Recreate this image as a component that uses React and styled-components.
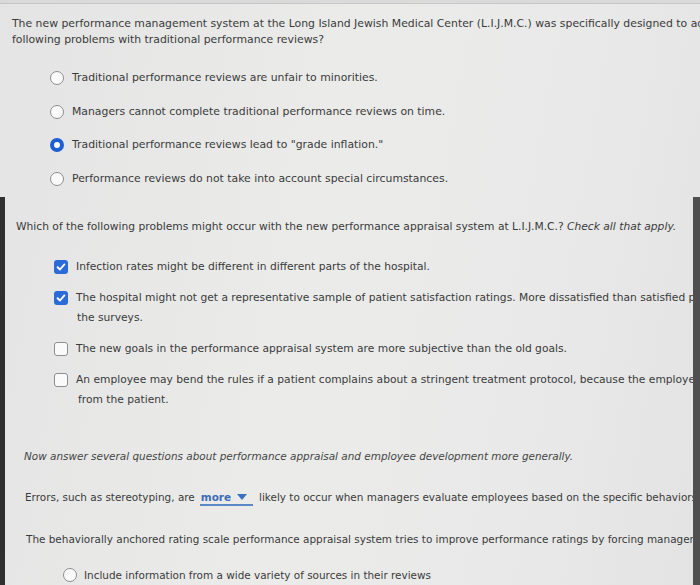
import React from 'react';
import styled, { createGlobalStyle } from 'styled-components';

const GlobalStyle = createGlobalStyle`
  html, body {
    margin: 0;
    padding: 0;
    background: #d9dad9;
  }
  body {
    font-family: "DejaVu Sans", Verdana, sans-serif;
    font-size: 10.7px;
    color: #3a3a3a;
  }
`;

const Page = styled.div`
  width: 700px;
  height: 582px;
  margin-top: 3px;
  overflow: hidden;
  border-top: 1px solid #c5c6c5;
  background: linear-gradient(100deg, #e3e4e3 0%, #ebecea 45%, #e8e9e8 75%, #e2e3e2 100%);
`;

const Intro = styled.section`
  padding: 12px 0 0 12px;
  overflow: hidden;
  font-size: 10.85px;
`;

const Framed = styled.div`
  margin-top: 8px;
  border-left: 5px solid #2f2f2f;
  border-right: 7px solid #4f4f4f;
  overflow: hidden;
`;

const Lower = styled.section`
  font-size: 10.45px;
`;

const Prompt = styled.div`
  line-height: 16px;
  white-space: nowrap;
  padding-left: ${(p) => p.$indent || 0}px;
  margin-top: ${(p) => p.$top || 0}px;
  font-style: ${(p) => (p.$italic ? 'italic' : 'normal')};
  color: ${(p) => (p.$italic ? '#454545' : 'inherit')};
`;

const Em = styled.em`
  font-style: italic;
`;

const OptionList = styled.div`
  display: flex;
  flex-direction: column;
  gap: ${(p) => p.$gap}px;
  margin-top: ${(p) => p.$top}px;
  padding-left: ${(p) => p.$indent}px;
`;

const Option = styled.div`
  display: flex;
  align-items: flex-start;
  gap: ${(p) => p.$gap || 8}px;
  line-height: 20px;
  white-space: nowrap;
`;

const Radio = styled.span`
  flex: none;
  box-sizing: border-box;
  width: 14px;
  height: 14px;
  margin-top: 3px;
  border-radius: 50%;
  border: ${(p) => (p.$on ? '4.5px solid #1d5fd2' : '1.5px solid #8d8e8d')};
  background: #fafafa;
`;

const Box = styled.span`
  flex: none;
  box-sizing: border-box;
  width: 14px;
  height: 14px;
  margin-top: 3px;
  border-radius: 3px;
  display: flex;
  align-items: center;
  justify-content: center;
  border: ${(p) => (p.$on ? 'none' : '1.5px solid #8d8e8d')};
  background: ${(p) => (p.$on ? '#2a6bd8' : '#fafafa')};
`;

const Lines = styled.div`
  display: flex;
  flex-direction: column;
`;

const Wrapped = styled.span`
  padding-left: ${(p) => p.$shift || 0}px;
`;

const Select = styled.span`
  display: inline-flex;
  align-items: center;
  gap: 6px;
  margin: 0 6px 0 5px;
  padding: 0 6px 0 1px;
  line-height: 14px;
  color: #3d6db8;
  font-weight: bold;
  border-bottom: 2px solid #5d88c8;
`;

const Caret = styled.span`
  width: 0;
  height: 0;
  border-left: 5px solid transparent;
  border-right: 5px solid transparent;
  border-top: 6px solid #3a70c4;
`;

const Check = () => (
  <svg width="10" height="10" viewBox="0 0 10 10">
    <path d="M1.6 5.2 L4 7.5 L8.4 2.4" fill="none" stroke="#fff" strokeWidth="1.9" strokeLinecap="round" strokeLinejoin="round" />
  </svg>
);

const firstOptions = [
  'Traditional performance reviews are unfair to minorities.',
  'Managers cannot complete traditional performance reviews on time.',
  'Traditional performance reviews lead to "grade inflation."',
  'Performance reviews do not take into account special circumstances.',
];

const checks = [
  { on: true, lines: ['Infection rates might be different in different parts of the hospital.'] },
  {
    on: true,
    lines: [
      'The hospital might not get a representative sample of patient satisfaction ratings. More dissatisfied than satisfied patients fill out',
      'the surveys.',
    ],
    shift: 1,
  },
  { on: false, lines: ['The new goals in the performance appraisal system are more subjective than the old goals.'] },
  {
    on: false,
    lines: [
      'An employee may bend the rules if a patient complains about a stringent treatment protocol, because the employee wants a good rating',
      'from the patient.',
    ],
    shift: 2,
  },
];

export default function App() {
  return (
    <>
      <GlobalStyle />
      <Page>
        <Intro>
          <Prompt>
            The new performance management system at the Long Island Jewish Medical Center (L.I.J.M.C.) was specifically designed to address which of the
          </Prompt>
          <Prompt>following problems with traditional performance reviews?</Prompt>
          <OptionList $gap={13.5} $top={20} $indent={38}>
            {firstOptions.map((text, i) => (
              <Option key={text} $gap={8}>
                <Radio $on={i === 2} />
                <span>{text}</span>
              </Option>
            ))}
          </OptionList>
        </Intro>

        <Framed>
          <Prompt $indent={11} $top={22}>
            Which of the following problems might occur with the new performance appraisal system at L.I.J.M.C.? <Em>Check all that apply.</Em>
          </Prompt>
          <OptionList $gap={11} $top={22} $indent={49}>
            {checks.map((item) => (
              <Option key={item.lines[0]} $gap={8}>
                <Box $on={item.on}>{item.on && <Check />}</Box>
                <Lines>
                  {item.lines.map((line, j) => (
                    <Wrapped key={line} $shift={j > 0 ? item.shift : 0}>
                      {line}
                    </Wrapped>
                  ))}
                </Lines>
              </Option>
            ))}
          </OptionList>

          <Lower>
            <Prompt $indent={19} $top={38} $italic>
              Now answer several questions about performance appraisal and employee development more generally.
            </Prompt>
            <Prompt $indent={20} $top={25}>
              Errors, such as stereotyping, are
              <Select>
                more <Caret />
              </Select>
              likely to occur when managers evaluate employees based on the specific behaviors they exhibit.
            </Prompt>
            <Prompt $indent={21} $top={25}>
              The behaviorally anchored rating scale performance appraisal system tries to improve performance ratings by forcing managers to:
            </Prompt>
            <OptionList $gap={12} $top={18} $indent={58}>
              <Option $gap={7}>
                <Radio />
                <span>Include information from a wide variety of sources in their reviews</span>
              </Option>
            </OptionList>
          </Lower>
        </Framed>
      </Page>
    </>
  );
}
